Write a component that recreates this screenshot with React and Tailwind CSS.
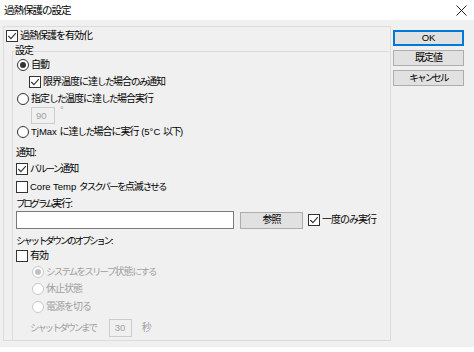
import React from 'react'

const font = "font-['Liberation_Sans','Noto_Sans_CJK_JP',sans-serif]"

// latin runs
function L({ children }) {
  return <span className="tracking-normal text-[9.5px]">{children}</span>
}

// kana runs (narrower in the original UI font)
function K({ children, className = 'tracking-[-1.8px]' }) {
  return <span className={`text-[9.5px] ${className}`}>{children}</span>
}

function Check({ checked, disabled }) {
  return (
    <span
      className={`w-[12px] h-[12px] shrink-0 border bg-white flex items-center justify-center ${
        disabled ? 'border-[#bcbcbc]' : 'border-[#333333]'
      }`}
    >
      {checked && (
        <svg width="10" height="10" viewBox="0 0 10 10">
          <path d="M1.3 5 L3.9 7.6 L8.8 2.2" fill="none" stroke="#333333" strokeWidth="1.1" />
        </svg>
      )}
    </span>
  )
}

function Radio({ checked, disabled }) {
  return (
    <span
      className={`w-[12px] h-[12px] shrink-0 rounded-full border bg-white flex items-center justify-center ${
        disabled ? 'border-[#c8c8c8]' : 'border-[#333333]'
      }`}
    >
      {checked && (
        <span className={`w-[6px] h-[6px] rounded-full ${disabled ? 'bg-[#c0c0c0]' : 'bg-[#333333]'}`} />
      )}
    </span>
  )
}

function Row({ className = '', children, box, disabled }) {
  return (
    <div className={`flex items-center h-[16px] gap-[2px] ${disabled ? 'text-[#a0a0a0]' : ''} ${className}`}>
      {box}
      <span>{children}</span>
    </div>
  )
}

function Btn({ children, primary, className = '' }) {
  return (
    <div
      className={`h-[16px] flex items-center justify-center bg-[#e1e1e1] border ${
        primary ? 'border-[#0078d7] shadow-[inset_0_0_0_1px_#0078d7]' : 'border-[#adadad]'
      } ${className}`}
    >
      {children}
    </div>
  )
}

export default function App() {
  return (
    <div className={`w-[474px] h-[352px] bg-white flex flex-col text-[10px] tracking-[-1px] text-black leading-none ${font}`}>
      {/* Title bar */}
      <div className="h-[20px] flex items-center justify-between pl-[4px] pr-[7px] shrink-0">
        <span className="text-[10.5px]">過熱保護の設定</span>
        <svg width="11" height="11" viewBox="0 0 11 11">
          <path d="M0.5 0.5 L10.5 10.5 M10.5 0.5 L0.5 10.5" stroke="#222" strokeWidth="1" />
        </svg>
      </div>

      <div className="h-[327px] bg-[#f0f0f0] flex pl-[3px] pt-[6px] shrink-0">
        {/* Main frame */}
        <div className="w-[388px] h-[315px] border border-[#dcdcdc] flex flex-col pl-[2px] pt-[1px]">
          <Row box={<Check checked />} className="h-[14px]">過熱保護を有効化</Row>

          <fieldset className="ml-[6px] mt-[1px] mr-[1px] flex-1 border-t border-l border-[#dcdcdc] pl-[4px] flex flex-col">
            <legend className="-ml-[2px] px-0 leading-[12px] h-[12px]">設定</legend>

            <Row box={<Radio checked />} className="mt-[0px]">自動</Row>
            <Row box={<Check checked />} className="mt-[1px] ml-[12px]">
              限界温度に達<K className="tracking-[-1.5px]">した</K>場合<K className="tracking-[-1.5px]">のみ</K>通知
            </Row>
            <Row box={<Radio />} className="mt-[1px]">
              指定<K className="tracking-[-1.5px]">した</K>温度に達<K className="tracking-[-1.5px]">した</K>場合実行
            </Row>
            <div className="flex items-start h-[17px] ml-[14px] text-[#a0a0a0]">
              <div className="w-[24px] h-[17px] border border-[#cccccc] flex items-center pl-[4px]">
                <L>90</L>
              </div>
              <span className="ml-[5px] -mt-[1px] text-[9px]">°</span>
            </div>
            <Row box={<Radio />} className="mt-[0px]">
              <L>TjMax </L>に達<K className="tracking-[-1.5px]">した</K>場合に実行<L> (5°C </L>
              <span className="tracking-[-1.5px]">以下</span>
              <L>)</L>
            </Row>

            <div className="mt-[5px] ml-[-1px] h-[16px] flex items-center">通知:</div>
            <Row box={<Check checked />} className="ml-[-1px]">
              <K>バルーン</K>通知
            </Row>
            <Row box={<Check />} className="ml-[-1px] mt-[2px]">
              <L>Core Temp </L>
              <K>タスクバーを</K>点滅<K>させる</K>
            </Row>
            <div className="mt-[2px] ml-[-1px] h-[14px] flex items-center">
              <K className="tracking-[-2.2px]">プログラム</K>実行:
            </div>
            <div className="flex items-center h-[18px] ml-[-1px]">
              <div className="w-[218px] h-[18px] bg-white border border-[#7a7a7a]" />
              <Btn className="ml-[6px] w-[63px] h-[17px]">参照</Btn>
              <div className="ml-[5px] flex items-center gap-[2px]">
                <Check checked />
                <span>一度のみ実行</span>
              </div>
            </div>

            <div className="mt-[5px] ml-[-1px] h-[14px] flex items-center">
              <K className="tracking-[-2.2px]">シャットダウンのオプション:</K>
            </div>
            <Row box={<Check />} className="ml-[-1px]">有効</Row>
            <Row box={<Radio checked disabled />} disabled className="ml-[15px]">
              <K>システムをスリープ</K>状態<K>にする</K>
            </Row>
            <Row box={<Radio disabled />} disabled className="ml-[15px] mt-[1px]">休止状態</Row>
            <Row box={<Radio disabled />} disabled className="ml-[15px] mt-[2px]">電源を切る</Row>
            <div className="flex items-center h-[18px] ml-[13px] mt-[4px] text-[#a0a0a0]">
              <K className="tracking-[-2.2px]">シャットダウンまで</K>
              <div className="ml-[13px] w-[23px] h-[18px] border border-[#cccccc] flex items-center pl-[5px]">
                <L>30</L>
              </div>
              <span className="ml-[10px]">秒</span>
            </div>
          </fieldset>
        </div>

        {/* Buttons */}
        <div className="ml-[2px] pt-[4px] flex flex-col gap-[4px] w-[71px]">
          <Btn primary><L>OK</L></Btn>
          <Btn>既定値</Btn>
          <Btn><K>キャンセル</K></Btn>
        </div>
      </div>
    </div>
  )
}
